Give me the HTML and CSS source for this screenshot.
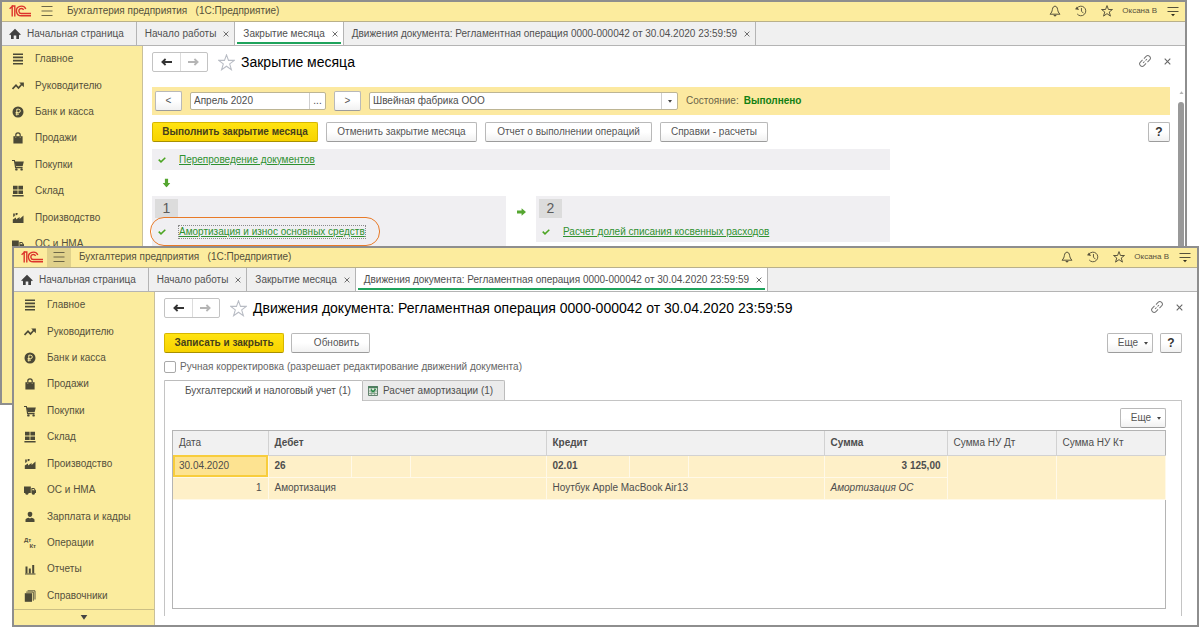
FILE: index.html
```html
<!DOCTYPE html>
<html lang="ru">
<head>
<meta charset="utf-8">
<title>Бухгалтерия предприятия</title>
<link rel="stylesheet" href="styles.css">
</head>
<body>
<svg class="sprite" aria-hidden="true">
  <symbol id="logo" viewBox="0 0 22 12">
    <g fill="none" stroke="#dc342c" stroke-width="1.4">
      <path d="M0.600 3.800L3.200 1.500V11.500"/><path d="M2.600 1H5.800V11.500"/>
      <path d="M16.800 4A4.900 4.800 0 1 0 12.600 10.800H22"/>
      <path d="M14.600 4.800A2.500 2.500 0 1 0 12.600 8.500H22"/>
    </g>
  </symbol>
  <symbol id="burger" viewBox="0 0 12 12"><path d="M0.500 1.500H11.500M0.500 6H11.500M0.500 10.500H11.500" stroke="#6d6748" stroke-width="1.200"/></symbol>
  <symbol id="bell" viewBox="0 0 12 12"><path d="M1 9.200H11C9.400 7.600 9 6.600 8.600 4.400 8.300 2.400 7.400 1.200 6 1.200S3.700 2.400 3.400 4.400C3 6.600 2.600 7.600 1 9.200Z" fill="none" stroke="#55503a"/><path d="M4.200 10H7.800L6 11.800Z" fill="#55503a"/></symbol>
  <symbol id="history" viewBox="0 0 13 12"><path d="M2.200 3A5.200 5.200 0 1 1 2.400 9.200" fill="none" stroke="#55503a"/><path d="M7 2.800V6.200L9.200 8.400" fill="none" stroke="#55503a"/><path d="M0 4.200L4.400 4.800 2.200 1Z" fill="#55503a"/></symbol>
  <symbol id="star" viewBox="0 0 16 16"><path d="M8 .8L9.900 6H15.300L11 9.300 12.600 14.800 8 11.500 3.400 14.800 5 9.300 .7 6H6.100Z" fill="none" stroke="currentColor" stroke-width="var(--line)"/></symbol>
  <symbol id="settings" viewBox="0 0 12 12"><path d="M.5 2.500H11.500M.5 6.500H11.500" stroke="#55503a"/><path d="M4 9H8L6 11.200Z" fill="#33301f"/></symbol>
  <symbol id="home" viewBox="0 0 12 12"><path d="M6 .8L11.800 6.400 10.800 7.200 10 6.500V11H7.300V7.600H4.700V11H2V6.500L1.200 7.200 .2 6.400Z" fill="#404040"/></symbol>
  <symbol id="link" viewBox="0 0 14 14"><g fill="none" stroke="#757575" transform="rotate(-45 7 7)"><path d="M6 9.500H3A2.500 2.500 0 0 1 3 4.500H6M8 4.500H11A2.500 2.500 0 0 1 11 9.500H8M4.300 7H6.300M7.700 7H9.700"/></g></symbol>
  <symbol id="close" viewBox="0 0 7 7"><path d="M.7 .7L6.300 6.300M6.300 .7L.7 6.300" stroke="#666" stroke-width="1.100"/></symbol>
  <symbol id="back" viewBox="0 0 11 8"><path d="M11 4H2M4.600 1L1.400 4 4.600 7" fill="none" stroke="currentColor" stroke-width="1.800"/></symbol>
  <symbol id="check" viewBox="0 0 8 6"><path d="M.7 2.600L3 4.900 7.300 .7" fill="none" stroke="#4ca523" stroke-width="1.500"/></symbol>
  <symbol id="arrow" viewBox="0 0 9 8"><path d="M0 2.400H4.600V.2L9 4 4.600 7.800V5.600H0Z" fill="#55a630"/></symbol>
  <symbol id="caret" viewBox="0 0 4 3"><path d="M0 0H4L2 2.800Z" fill="#444"/></symbol>

  <symbol id="m-main" viewBox="0 0 12 12"><path d="M1 1.200H11M1 4.400H11M1 7.600H11M1 10.800H11" stroke="#4b4936" stroke-width="1.600"/></symbol>
  <symbol id="m-trend" viewBox="0 0 12 12"><path d="M.5 9L4 5.200 6.500 8 10 4" fill="none" stroke="#4b4936" stroke-width="1.700"/><path d="M7.200 2.600H11.900V7.300Z" fill="#4b4936"/></symbol>
  <symbol id="m-bank" viewBox="0 0 12 12"><circle cx="6" cy="6" r="5.500" fill="#4b4936"/><path d="M4.800 9.500V3.200H6.600A1.700 1.700 0 0 1 6.600 6.600H3.600M3.600 8.100H7" fill="none" stroke="#fbec9e"/></symbol>
  <symbol id="m-bag" viewBox="0 0 12 12"><path d="M1.400 4.200H10.600V11.500H1.400Z" fill="#4b4936"/><path d="M3.800 6V3A2.200 2.200 0 0 1 8.200 3V6" fill="none" stroke="#4b4936" stroke-width="1.200"/><path d="M3.800 4.500V6M8.200 4.500V6" stroke="#b4aa74" stroke-width=".8"/></symbol>
  <symbol id="m-cart" viewBox="0 0 12 12"><path d="M0 1.500H2.400L3.600 8.600H10.600" fill="none" stroke="#4b4936" stroke-width="1.100"/><path d="M2.700 2.500H11.800L10.600 7.300H3.500Z" fill="#4b4936"/><circle cx="4.400" cy="10.400" r="1.200" fill="#4b4936"/><circle cx="9.600" cy="10.400" r="1.200" fill="#4b4936"/></symbol>
  <symbol id="m-store" viewBox="0 0 12 12"><path d="M1 .8H5.600V4.600H1ZM6.400 .8H11V4.600H6.400ZM1 5.400H5.600V9H1ZM6.400 5.400H11V9H6.400ZM.4 10H11.600V11.500H.4Z" fill="#4b4936"/></symbol>
  <symbol id="m-factory" viewBox="0 0 12 12"><path d="M.8 11V7.600L4 5.400V7.400L7.600 5V7L11.500 3.600V11Z" fill="#4b4936"/><path d="M1.200 5V1.600H2.800V4ZM3.600 3.600V1H5.600V2.600Z" fill="#4b4936"/></symbol>
  <symbol id="m-truck" viewBox="0 0 12 12"><path d="M0 2.500H6.800V9H0ZM7.400 4H10.200L12 6.400V9H7.400Z" fill="#4b4936"/><circle cx="2.900" cy="9.300" r="1.500" fill="#4b4936"/><circle cx="9.400" cy="9.300" r="1.500" fill="#4b4936"/><path d="M8.400 5H9.800L10.700 6.300H8.400Z" fill="#fbec9e"/></symbol>
  <symbol id="m-person" viewBox="0 0 12 12"><path d="M6 .8A2.300 2.300 0 0 1 8.300 3.300C8.300 4.900 7.300 6.100 6 6.100S3.700 4.900 3.700 3.300A2.300 2.300 0 0 1 6 .8ZM1.500 10.900V8.800C1.500 7.500 3.300 6.900 4.600 6.700L6 7.600 7.400 6.700C8.700 6.900 10.500 7.500 10.500 8.800V10.900Z" fill="#4b4936"/></symbol>
  <symbol id="m-chart" viewBox="0 0 12 12"><path d="M2.500 10.500V3.500M5.800 10.500V5.500M9.200 10.500V2" stroke="#4b4936" stroke-width="2"/><path d="M1 11H11.500" stroke="#4b4936"/></symbol>
  <symbol id="m-books" viewBox="0 0 12 12"><path d="M.8 3.200H8V11.800H.8Z" fill="#4b4936"/><path d="M2.200 2.100H9.300V10.700M3.600 .8H11V9.500" fill="none" stroke="#4b4936" stroke-width=".9"/></symbol>
  <symbol id="sheet" viewBox="0 0 10 10"><path d="M.5 .5H9.500V9.500H.5Z" fill="#dfeade" stroke="#64836f"/><path d="M0 1.200H10" stroke="#4d7f5f" stroke-width="2"/><path d="M1 5H9M1 7.500H9M3.300 2V9M6.600 2V9" stroke="#7f9a88" stroke-width=".8"/><path d="M3 3.500L5 6 7.600 3" fill="none" stroke="#268a44" stroke-width="1.300"/></symbol>
</svg>

<main class="desktop">
  <section class="window window-closing" aria-label="Закрытие месяца">
    <header class="titlebar">
      <svg class="logo"><use href="#logo"/></svg>
      <button class="burger" aria-label="Меню"><svg class="i12"><use href="#burger"/></svg></button>
      <span class="app-name">Бухгалтерия предприятия &nbsp;&nbsp;(1С:Предприятие)</span>
      <div class="tools">
        <button aria-label="Уведомления"><svg class="i12"><use href="#bell"/></svg></button>
        <button aria-label="История"><svg class="i12"><use href="#history"/></svg></button>
        <button aria-label="Избранное"><svg class="i12 star-dark"><use href="#star"/></svg></button>
        <span class="user">Оксана В</span>
        <button aria-label="Настройки"><svg class="i12"><use href="#settings"/></svg></button>
      </div>
    </header>
    <nav class="tabs">
      <a class="tab tab-home" href="#"><svg class="i12"><use href="#home"/></svg>Начальная страница</a>
      <a class="tab" href="#">Начало работы<svg class="x"><use href="#close"/></svg></a>
      <a class="tab active" href="#">Закрытие месяца<svg class="x"><use href="#close"/></svg></a>
      <a class="tab" href="#">Движения документа: Регламентная операция 0000-000042 от 30.04.2020 23:59:59<svg class="x"><use href="#close"/></svg></a>
    </nav>
    <div class="body">
      <nav class="sidebar">
        <div class="menu">
          <a href="#"><svg class="i12"><use href="#m-main"/></svg>Главное</a>
          <a href="#"><svg class="i12"><use href="#m-trend"/></svg>Руководителю</a>
          <a href="#"><svg class="i12"><use href="#m-bank"/></svg>Банк и касса</a>
          <a href="#"><svg class="i12"><use href="#m-bag"/></svg>Продажи</a>
          <a href="#"><svg class="i12"><use href="#m-cart"/></svg>Покупки</a>
          <a href="#"><svg class="i12"><use href="#m-store"/></svg>Склад</a>
          <a href="#"><svg class="i12"><use href="#m-factory"/></svg>Производство</a>
          <a href="#"><svg class="i12"><use href="#m-truck"/></svg>ОС и НМА</a>
          <a href="#"></a><a href="#"></a><a href="#"></a><a href="#"></a>
        </div>
      </nav>
      <div class="content">
        <div class="page-head">
          <div class="history-nav"><button aria-label="Назад"><svg><use href="#back"/></svg></button><button class="forward" aria-label="Вперед"><svg><use href="#back"/></svg></button></div>
          <svg class="fav"><use href="#star"/></svg>
          <h1>Закрытие месяца</h1>
          <div class="page-tools"><button aria-label="Ссылка"><svg class="i14"><use href="#link"/></svg></button><button aria-label="Закрыть"><svg class="i7"><use href="#close"/></svg></button></div>
        </div>
        <div class="period">
          <button class="btn step" aria-label="Предыдущий месяц">&lt;</button>
          <div class="field month"><input aria-label="Период" value="Апрель 2020"><button aria-label="Выбрать">...</button></div>
          <button class="btn step" aria-label="Следующий месяц">&gt;</button>
          <div class="field company"><input aria-label="Организация" value="Швейная фабрика ООО"><button aria-label="Список"><svg class="caret"><use href="#caret"/></svg></button></div>
          <span class="state">Состояние:<b>Выполнено</b></span>
        </div>
        <div class="commands">
          <button class="btn primary run">Выполнить закрытие месяца</button>
          <button class="btn cancel">Отменить закрытие месяца</button>
          <button class="btn report">Отчет о выполнении операций</button>
          <button class="btn calc">Справки - расчеты</button>
          <button class="btn help" aria-label="Справка">?</button>
        </div>
        <div class="process">
          <div class="operation repost"><svg class="check"><use href="#check"/></svg><a href="#">Перепроведение документов</a></div>
          <svg class="arrow down"><use href="#arrow"/></svg>
          <div class="stages">
            <div class="stage first">
              <span class="number">1</span>
              <div class="operation marked"><svg class="check"><use href="#check"/></svg><a class="focused" href="#">Амортизация и износ основных средств</a></div>
            </div>
            <svg class="arrow right"><use href="#arrow"/></svg>
            <div class="stage">
              <span class="number">2</span>
              <div class="operation"><svg class="check"><use href="#check"/></svg><a href="#">Расчет долей списания косвенных расходов</a></div>
            </div>
          </div>
        </div>
        <div class="scroll"><svg><use href="#caret"/></svg><span></span></div>
      </div>
    </div>
  </section>

  <section class="window window-moves" aria-label="Движения документа">
    <header class="titlebar">
      <svg class="logo"><use href="#logo"/></svg>
      <button class="burger pressed" aria-label="Меню"><svg class="i12"><use href="#burger"/></svg></button>
      <span class="app-name">Бухгалтерия предприятия &nbsp;&nbsp;(1С:Предприятие)</span>
      <div class="tools">
        <button aria-label="Уведомления"><svg class="i12"><use href="#bell"/></svg></button>
        <button aria-label="История"><svg class="i12"><use href="#history"/></svg></button>
        <button aria-label="Избранное"><svg class="i12 star-dark"><use href="#star"/></svg></button>
        <span class="user">Оксана В</span>
        <button aria-label="Настройки"><svg class="i12"><use href="#settings"/></svg></button>
      </div>
    </header>
    <nav class="tabs">
      <a class="tab tab-home" href="#"><svg class="i12"><use href="#home"/></svg>Начальная страница</a>
      <a class="tab" href="#">Начало работы<svg class="x"><use href="#close"/></svg></a>
      <a class="tab" href="#">Закрытие месяца<svg class="x"><use href="#close"/></svg></a>
      <a class="tab active" href="#">Движения документа: Регламентная операция 0000-000042 от 30.04.2020 23:59:59<svg class="x"><use href="#close"/></svg></a>
    </nav>
    <div class="body">
      <nav class="sidebar">
        <div class="menu">
          <a href="#"><svg class="i12"><use href="#m-main"/></svg>Главное</a>
          <a href="#"><svg class="i12"><use href="#m-trend"/></svg>Руководителю</a>
          <a href="#"><svg class="i12"><use href="#m-bank"/></svg>Банк и касса</a>
          <a href="#"><svg class="i12"><use href="#m-bag"/></svg>Продажи</a>
          <a href="#"><svg class="i12"><use href="#m-cart"/></svg>Покупки</a>
          <a href="#"><svg class="i12"><use href="#m-store"/></svg>Склад</a>
          <a href="#"><svg class="i12"><use href="#m-factory"/></svg>Производство</a>
          <a href="#"><svg class="i12"><use href="#m-truck"/></svg>ОС и НМА</a>
          <a href="#"><svg class="i12"><use href="#m-person"/></svg>Зарплата и кадры</a>
          <a href="#"><span class="dtkt"><i>Дт</i><i>Кт</i></span>Операции</a>
          <a href="#"><svg class="i12"><use href="#m-chart"/></svg>Отчеты</a>
          <a href="#"><svg class="i12"><use href="#m-books"/></svg>Справочники</a>
        </div>
        <button class="more" aria-label="Еще разделы"><svg><use href="#caret"/></svg></button>
      </nav>
      <div class="content">
        <div class="page-head">
          <div class="history-nav"><button aria-label="Назад"><svg><use href="#back"/></svg></button><button class="forward" aria-label="Вперед"><svg><use href="#back"/></svg></button></div>
          <svg class="fav"><use href="#star"/></svg>
          <h1>Движения документа: Регламентная операция 0000-000042 от 30.04.2020 23:59:59</h1>
          <div class="page-tools"><button aria-label="Ссылка"><svg class="i14"><use href="#link"/></svg></button><button aria-label="Закрыть"><svg class="i7"><use href="#close"/></svg></button></div>
        </div>
        <div class="commands doc-commands">
          <button class="btn primary save">Записать и закрыть</button>
          <button class="btn refresh">Обновить</button>
          <button class="btn extra">Еще<svg class="caret"><use href="#caret"/></svg></button>
          <button class="btn help" aria-label="Справка">?</button>
        </div>
        <label class="manual"><input type="checkbox">Ручная корректировка (разрешает редактирование движений документа)</label>
        <div class="registers">
          <button class="register current">Бухгалтерский и налоговый учет (1)</button>
          <button class="register"><svg><use href="#sheet"/></svg>Расчет амортизации (1)</button>
        </div>
        <div class="panel">
          <button class="btn extra">Еще<svg class="caret"><use href="#caret"/></svg></button>
          <div class="grid">
            <table>
              <colgroup><col class="c-date"><col class="c-acc"><col class="c-sub"><col class="c-rest"><col class="c-acc"><col class="c-sub"><col class="c-rest"><col class="c-sum"><col class="c-tax"><col class="c-tax"></colgroup>
              <thead>
                <tr><th class="plain">Дата</th><th colspan="3">Дебет</th><th colspan="3">Кредит</th><th>Сумма</th><th class="plain">Сумма НУ Дт</th><th class="plain">Сумма НУ Кт</th></tr>
              </thead>
              <tbody>
                <tr><td class="selected">30.04.2020</td><td><b>26</b></td><td></td><td></td><td><b>02.01</b></td><td></td><td></td><td class="num"><b>3 125,00</b></td><td rowspan="2"></td><td rowspan="2"></td></tr>
                <tr><td class="num">1</td><td colspan="3">Амортизация</td><td colspan="3">Ноутбук Apple MacBook Air13</td><td><em>Амортизация ОС</em></td></tr>
              </tbody>
            </table>
          </div>
        </div>
      </div>
    </div>
  </section>
</main>
</body>
</html>
```

FILE: styles.css
```css
* { box-sizing: border-box; }
body { margin: 0; background: #fff; font: 10px/12px "Liberation Sans", Arial, sans-serif; color: #4d4d4d; }
button, input { font: inherit; color: inherit; }
button { margin: 0; padding: 0; border: 0; background: none; display: flex; align-items: center; justify-content: center; }
a { color: inherit; text-decoration: none; }
svg { display: block; flex: none; --line: 1; }
.sprite { position: absolute; width: 0; height: 0; }
.i12 { width: 12px; height: 12px; }
.i14 { width: 14px; height: 14px; }
.i7 { width: 7px; height: 7px; }
.caret { width: 4px; height: 3px; }

.desktop { position: relative; height: 100vh; min-height: 628px; overflow: hidden; }
.window { position: absolute; display: flex; flex-direction: column; border: 2px solid #8e8e8e; background: #fff; overflow: hidden; }
.window-closing { left: 0; right: 13px; top: 0; height: 405px; }
.window-moves { left: 12px; right: 1px; top: 246px; bottom: 1px; }

.titlebar { display: flex; align-items: center; flex: none; height: 20px; padding: 0 6px 2px 7px; background: #fcec9e; border-bottom: 1px solid #b9b08a; color: #55503c; }
.logo { width: 22px; height: 12px; }
.burger { height: 19px; width: 24px; margin: 0 8px -2px 4px; padding-bottom: 2px; }
.burger.pressed { background: #e0d18b; }
.tools { display: flex; align-items: center; gap: 14px; margin-left: auto; }
.user { font-size: 8px; margin: 0 -4px 0 -5px; }
.star-dark { color: #55503a; --line: 1.3; }

.tabs { display: flex; flex: none; height: 24px; background: #f0f0f0; border-bottom: 1px solid #b4b4b4; color: #505050; }
.tab { position: relative; display: flex; align-items: center; gap: 7px; padding: 0 5px 0 8px; border-right: 1px solid #b4b4b4; white-space: nowrap; }
.tab-home { gap: 6px; padding: 0 12px 0 7px; }
.tab.active { background: #fff; }
.tab.active::after { content: ""; position: absolute; left: 2px; right: 2px; bottom: 1px; height: 2px; background: #1fa35c; }
.x { width: 6px; height: 6px; }

.body { display: flex; flex: 1; min-height: 0; }
.sidebar { display: flex; flex-direction: column; flex: none; width: 141px; background: #fbec9e; border-right: 1px solid #c9c09a; color: #55503c; }
.window-closing .sidebar { padding-bottom: 40px; }
.menu { display: flex; flex-direction: column; flex: 1; }
.menu a { display: flex; flex: 1; align-items: center; gap: 11px; padding-left: 10px; }
.dtkt { width: 12px; font-weight: bold; font-size: 6px; line-height: 6px; }
.dtkt i { display: block; font-style: normal; }
.dtkt i + i { text-align: right; }
.more { height: 16px; border-top: 1px solid #cbbf84; }
.more svg { width: 8px; height: 5px; }

.content { position: relative; display: flex; flex-direction: column; flex: 1; min-width: 0; padding: 6px 15px 9px 9px; }
.page-head { display: flex; align-items: center; height: 20px; }
.history-nav { display: flex; width: 56px; height: 20px; border: 1px solid #c3c3c3; border-radius: 2px; }
.history-nav button { flex: 1; color: #333; }
.history-nav svg { width: 11px; height: 8px; }
.history-nav .forward { border-left: 1px solid #dcdcdc; color: #b5b5b5; }
.forward svg { transform: rotate(180deg); }
.fav { width: 17px; height: 17px; margin: 0 6px 0 10px; color: #b8bcc4; }
h1 { margin: 0; font-size: 14px; line-height: 18px; font-weight: normal; color: #000; white-space: nowrap; }
.page-tools { display: flex; align-items: center; gap: 12px; margin: 0 -1px 2px auto; }

.btn { height: 20px; border: 1px solid #b9b9b9; border-bottom-color: #9c9c9c; border-radius: 2px; background: linear-gradient(#fff 50%, #f1f1f1); white-space: nowrap; color: #555; }
.btn.primary { background: linear-gradient(#ffe312, #f7d300); border-color: #d6b600; border-bottom-color: #a89000; font-weight: bold; color: #46401c; }
.btn.help { width: 22px; margin-left: auto; font-size: 12px; font-weight: bold; color: #333; }
.btn.extra { width: 46px; gap: 6px; padding-left: 6px; }

.period { display: flex; align-items: center; gap: 8px; height: 28px; margin-top: 15px; padding: 0 3px; background: #fce9a0; }
.step { width: 27px; }
.field { display: flex; height: 18px; border: 1px solid #bdb594; border-radius: 2px; background: #fff; }
.field input { flex: 1; min-width: 0; padding: 0 3px; border: 0; background: none; outline: 0; color: #4d4d4d; }
.field button { width: 16px; border-left: 1px solid #cfcfcf; }
.month { width: 136px; }
.company { width: 309px; }
.state { color: #6a6448; }
.state b { margin-left: 5px; color: #128012; }

.commands { display: flex; gap: 8px; margin-top: 7px; }
.run { width: 166px; }
.cancel { width: 151px; }
.report { width: 167px; }
.calc { width: 108px; }
.save { width: 120px; }
.refresh { width: 79px; padding-left: 12px; }

.process { width: 738px; max-width: 100%; margin-top: 7px; color: #2f9130; }
.operation { display: flex; align-items: center; gap: 13px; }
.operation a { text-decoration: underline; }
.repost { height: 21px; padding-left: 6px; background: #f0eff2; }
.check { width: 8px; height: 6px; }
.arrow { width: 9px; height: 8px; }
.arrow.down { margin: 9px 0 9px 10px; transform: rotate(90deg); }
.arrow.right { margin-top: 12px; justify-self: center; }
.stages { display: grid; grid-template-columns: 1fr 30px 1fr; align-items: start; }
.stage { height: 46px; padding: 3px; background: #f0eff2; }
.stage.first { height: 60px; }
.number { display: block; width: 23px; height: 19px; background: #dcdcdc; color: #5b5b5b; font-size: 14px; line-height: 19px; text-align: center; }
.stage .operation { position: relative; height: 28px; padding-left: 3px; }
.marked::before { content: ""; position: absolute; left: -5px; top: -1px; width: 228px; height: 27px; border: 1px solid #e87a28; border-radius: 14px; }
.focused { outline: 1px dotted #8a8a8a; }
.scroll { position: absolute; top: 45px; right: 1px; bottom: 0; width: 6px; display: flex; flex-direction: column; align-items: center; gap: 8px; }
.scroll svg { width: 5px; height: 3px; transform: rotate(180deg); opacity: .4; }
.scroll span { flex: 1; width: 6px; border-radius: 3px 3px 0 0; background: #999; }

.doc-commands { gap: 7px; margin-top: 15px; }
.doc-commands .extra { margin-left: auto; }
.doc-commands .help { margin-left: 0; }
.manual { display: flex; align-items: center; gap: 4px; margin-top: 8px; color: #666; }
.manual input { appearance: none; width: 12px; height: 12px; margin: 0; border: 1px solid #a9a9a9; border-radius: 2px; background: #fff; }
.registers { display: flex; margin-top: 7px; }
.register { justify-content: flex-start; height: 20px; gap: 5px; width: 142px; padding-left: 5px; border: 1px solid #bcbcbc; border-bottom: 0; border-left: 0; background: #ebebeb; border-radius: 0 2px 0 0; color: #505050; }
.register svg { width: 10px; height: 10px; }
.register.current { position: relative; width: 199px; height: 21px; margin-bottom: -1px; padding-left: 20px; border-left: 1px solid #c4c4c4; background: #fff; }
.panel { display: flex; flex-direction: column; flex: 1; gap: 2px; padding: 7px 15px 7px 7px; border: 1px solid #c4c4c4; border-bottom: 0; }
.panel .extra { align-self: flex-end; }
.grid { flex: 1; border: 1px solid #b4b4b4; }
table { width: 100%; table-layout: fixed; border-collapse: collapse; }
.c-date { width: 95px; }
.c-acc { width: 83px; }
.c-sub { width: 59px; }
.c-rest { width: 136px; }
.c-sum { width: 123px; }
.c-tax { width: 109px; }
th, td { padding: 0 6px; text-align: left; white-space: nowrap; }
th { height: 24px; background: #f1f1f1; border-right: 1px solid #d2d2d2; border-bottom: 1px solid #d2d2d2; }
th:last-child { border-right: 0; }
.plain { font-weight: normal; }
td { height: 22px; background: #fef0c8; border-right: 1px solid #fff9e8; border-bottom: 1px solid #fff9e8; }
td.selected { background: #fde391; outline: 2px solid #f8cd3c; outline-offset: -2px; }
.num { text-align: right; }
```
